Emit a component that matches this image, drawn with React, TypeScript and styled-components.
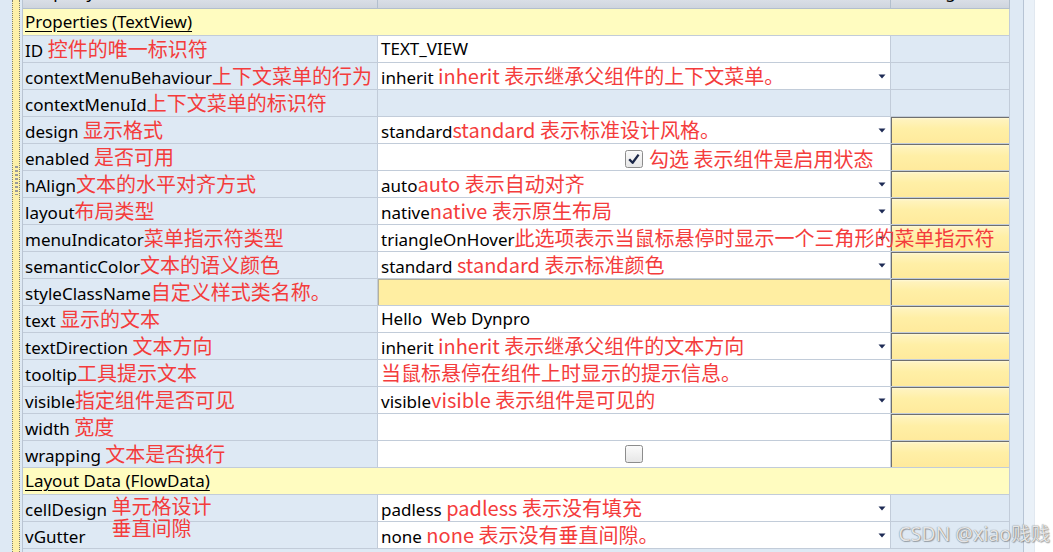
import styled, { createGlobalStyle } from "styled-components";

const GlobalStyle = createGlobalStyle`
  html, body {
    margin: 0;
    padding: 0;
    background: #dee9f4;
  }
`;

const UI_FONT = `"Noto Sans", "Open Sans", "Noto Sans CJK SC", sans-serif`;
const NOTE_FONT = `"Noto Sans CJK SC", "Noto Sans", sans-serif`;
const LINE = "#c2ccd9";

export const Page = styled.div`
  position: relative;
  display: flex;
  width: 1053px;
  height: 552px;
  overflow: hidden;
  background: #dee9f4;
  font-family: ${UI_FONT};
  font-size: 17px;
  color: #000;
`;

export const LeftGutter = styled.div`
  display: flex;
  width: 22px;
  padding: 0 2px 0 12px;
  box-sizing: border-box;
`;

export const Splitter = styled.div`
  display: flex;
  flex-direction: column;
  align-items: center;
  width: 8px;
  padding-top: 166px;
  box-sizing: border-box;
  background: #fdf0a8;
  border-left: 1px dotted #7e7e6e;
  border-right: 1px dotted #7e7e6e;
`;

export const Grip = styled.div`
  width: 3px;
  height: 29px;
  background: repeating-linear-gradient(to bottom, #9b9b9b 0 2px, transparent 2px 4px);
`;

export const Table = styled.div`
  display: grid;
  grid-template-columns: 355px 513px 119px;
  grid-template-rows: 9px;
  grid-auto-rows: 27px;
  align-content: start;
  width: 988px;
  box-sizing: border-box;
  border-left: 1px solid #b9c4d2;
`;

export const HeadCell = styled.div`
  display: flex;
  align-items: flex-end;
  overflow: hidden;
  padding-left: 3px;
  box-sizing: border-box;
  background: linear-gradient(#d9dee6, #cfd5de);
  border-right: 1px solid #b3bfcd;
  border-bottom: 1px solid #b3bfcd;

  span {
    line-height: 20px;
    margin-bottom: 6px;
  }
`;

export const SectionCell = styled.div`
  grid-column: 1 / -1;
  padding-left: 2px;
  box-sizing: border-box;
  background: #fffcc0;
  border-right: 1px solid ${LINE};
  border-bottom: 1px solid ${LINE};
  line-height: 26px;
  text-decoration: underline;
  text-underline-offset: 3px;
`;

export const NameCell = styled.div`
  padding-left: 2px;
  box-sizing: border-box;
  background: #dee9f4;
  border-right: 1px solid ${LINE};
  border-bottom: 1px solid ${LINE};
  line-height: 26px;
  white-space: pre;
`;

type Field = "edit" | "readonly" | "required";

const fieldBg: Record<Field, string> = {
  edit: "#ffffff",
  readonly: "#dee9f4",
  required: "#ffeea2",
};

export const ValueCell = styled.div<{ $field: Field }>`
  display: grid;
  grid-template-columns: minmax(0, 1fr) 16px;
  align-items: center;
  padding-left: 3px;
  box-sizing: border-box;
  background: ${(p) => fieldBg[p.$field]};
  border-right: 1px solid ${LINE};
  border-bottom: 1px solid ${LINE};
  box-shadow: ${(p) => (p.$field === "required" ? "inset 1px 1px 0 #b4b09a" : "none")};
`;

export const CheckCell = styled.div`
  display: grid;
  grid-template-columns: 1fr auto 1fr;
  align-items: center;
  box-sizing: border-box;
  background: #fff;
  border-right: 1px solid ${LINE};
  border-bottom: 1px solid ${LINE};
  white-space: pre;
`;

export const ValueText = styled.div`
  position: relative;
  z-index: 1;
  line-height: 26px;
  white-space: pre;
`;

export const Note = styled.span<{ $indent?: number; $lift?: number }>`
  position: relative;
  top: ${(p) => (p.$lift ? -p.$lift : 0)}px;
  margin-left: ${(p) => p.$indent ?? 0}px;
  font-family: ${NOTE_FONT};
  font-size: 20px;
  font-weight: 400;
  color: #f43c3c;
`;

export const CheckNote = styled(Note)`
  padding-left: 6px;
`;

export const BindCell = styled.div<{ $bound: boolean }>`
  box-sizing: border-box;
  border-right: 1px solid ${LINE};
  border-bottom: 1px solid ${LINE};
  background: ${(p) =>
    p.$bound
      ? "linear-gradient(to bottom, #fffbe4 0, #fff3bd 3px, #ffefa6 45%, #ffea9c 100%)"
      : "#dee9f4"};
  box-shadow: ${(p) => (p.$bound ? "inset 1px 1px 0 #6f6f6f" : "none")};
`;

export const ScrollStrip = styled.div`
  display: flex;
  flex: 1;
  background: #fff;
`;

export const StripBand = styled.div<{ $w: number; $bg: string; $edge: string }>`
  width: ${(p) => p.$w}px;
  background: ${(p) => p.$bg};
  border-right: 1px solid ${(p) => p.$edge};
`;

export const Watermark = styled.div`
  position: absolute;
  right: 3px;
  bottom: 5px;
  font-family: ${UI_FONT};
  font-size: 19.5px;
  color: rgba(240, 240, 240, 0.92);
  text-shadow: 0 0 1px #6b6b6b, 1px 1px 1px rgba(0, 0, 0, 0.3);
  white-space: nowrap;
`;

const DropArrow = () => (
  <svg width="16" height="6" viewBox="0 0 16 6">
    <polygon points="4.5,0.5 11.5,0.5 8,4.5" fill="#1e2b55" />
  </svg>
);

const CheckBox = ({ on }: { on: boolean }) => (
  <svg width="18" height="18" viewBox="0 0 18 18">
    <defs>
      <linearGradient id={on ? "cbOn" : "cbOff"} x1="0" y1="0" x2="0" y2="1">
        <stop offset="0" stopColor="#fbfbfb" />
        <stop offset="1" stopColor="#e6e6e6" />
      </linearGradient>
    </defs>
    <rect x="0.5" y="0.5" width="17" height="17" rx="2" fill={`url(#${on ? "cbOn" : "cbOff"})`} stroke="#8c8c8c" />
    {on && (
      <path d="M4.2 9.2 L7.6 12.8 L13.6 4.6" fill="none" stroke="#1b2748" strokeWidth="2.3" strokeLinejoin="round" />
    )}
  </svg>
);

type PropRow = {
  name: string;
  note?: string;
  noteIndent?: number;
  noteLift?: number;
  value?: string;
  valueNote?: string;
  dropdown?: boolean;
  check?: "on" | "off";
  field?: Field;
  bound?: boolean;
};

type RowData = { section: string } | PropRow;

const rows: RowData[] = [
  { section: "Properties (TextView)" },
  { name: "ID", note: " 控件的唯一标识符", value: "TEXT_VIEW" },
  { name: "contextMenuBehaviour", note: "上下文菜单的行为", value: "inherit", valueNote: " inherit 表示继承父组件的上下文菜单。", dropdown: true },
  { name: "contextMenuId", note: "上下文菜单的标识符", field: "readonly" },
  { name: "design", note: " 显示格式", value: "standard", valueNote: "standard 表示标准设计风格。", dropdown: true, bound: true },
  { name: "enabled", note: " 是否可用", check: "on", valueNote: "勾选 表示组件是启用状态", bound: true },
  { name: "hAlign", note: "文本的水平对齐方式", value: "auto", valueNote: "auto 表示自动对齐", dropdown: true, bound: true },
  { name: "layout", note: "布局类型", value: "native", valueNote: "native 表示原生布局", dropdown: true, bound: true },
  { name: "menuIndicator", note: "菜单指示符类型", value: "triangleOnHover", valueNote: "此选项表示当鼠标悬停时显示一个三角形的菜单指示符", dropdown: true, bound: true },
  { name: "semanticColor", note: "文本的语义颜色", value: "standard", valueNote: " standard 表示标准颜色", dropdown: true, bound: true },
  { name: "styleClassName", note: "自定义样式类名称。", field: "required", bound: true },
  { name: "text", note: " 显示的文本", value: "Hello  Web Dynpro", bound: true },
  { name: "textDirection", note: " 文本方向", value: "inherit", valueNote: " inherit 表示继承父组件的文本方向", dropdown: true, bound: true },
  { name: "tooltip", note: "工具提示文本", valueNote: "当鼠标悬停在组件上时显示的提示信息。", bound: true },
  { name: "visible", note: "指定组件是否可见", value: "visible", valueNote: "visible 表示组件是可见的", dropdown: true, bound: true },
  { name: "width", note: " 宽度", bound: true },
  { name: "wrapping", note: " 文本是否换行", check: "off", bound: true },
  { section: "Layout Data (FlowData)" },
  { name: "cellDesign", note: " 单元格设计", noteLift: 2, value: "padless", valueNote: " padless 表示没有填充", dropdown: true },
  { name: "vGutter", note: "垂直间隙", noteIndent: 26, noteLift: 7, value: "none", valueNote: " none 表示没有垂直间隙。", dropdown: true },
];

const PropertyRow = ({ row }: { row: PropRow }) => (
  <>
    <NameCell>
      {row.name}
      {row.note && (
        <Note $indent={row.noteIndent} $lift={row.noteLift}>
          {row.note}
        </Note>
      )}
    </NameCell>
    {row.check ? (
      <CheckCell>
        <span />
        <CheckBox on={row.check === "on"} />
        <span>{row.valueNote && <CheckNote>{row.valueNote}</CheckNote>}</span>
      </CheckCell>
    ) : (
      <ValueCell $field={row.field ?? "edit"}>
        <ValueText>
          {row.value}
          {row.valueNote && <Note>{row.valueNote}</Note>}
        </ValueText>
        {row.dropdown ? <DropArrow /> : <span />}
      </ValueCell>
    )}
    <BindCell $bound={!!row.bound} />
  </>
);

export default function App() {
  return (
    <>
      <GlobalStyle />
      <Page>
        <LeftGutter>
          <Splitter>
            <Grip />
          </Splitter>
        </LeftGutter>
        <Table>
          <HeadCell>
            <span>Property</span>
          </HeadCell>
          <HeadCell>
            <span>Value</span>
          </HeadCell>
          <HeadCell>
            <span>Binding</span>
          </HeadCell>
          {rows.map((row, i) =>
            "section" in row ? (
              <SectionCell key={i}>{row.section}</SectionCell>
            ) : (
              <PropertyRow key={i} row={row} />
            )
          )}
        </Table>
        <ScrollStrip>
          <StripBand $w={13} $bg="#dee9f4" $edge="#b7c4d4" />
          <StripBand $w={10} $bg="#eaf1f8" $edge="#e1e8f0" />
        </ScrollStrip>
        <Watermark>CSDN @xiao贱贱</Watermark>
      </Page>
    </>
  );
}
